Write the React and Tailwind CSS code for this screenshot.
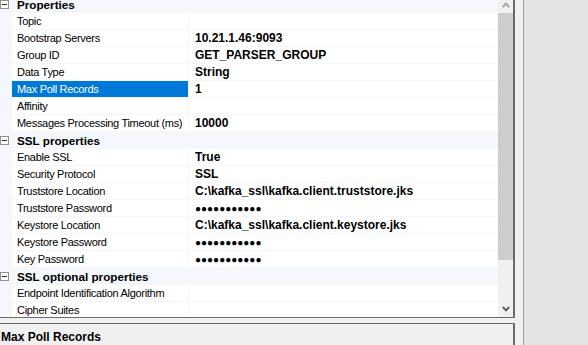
const rows = [
  { cat: "Properties" },
  { label: "Topic", value: "" },
  { label: "Bootstrap Servers", value: "10.21.1.46:9093" },
  { label: "Group ID", value: "GET_PARSER_GROUP" },
  { label: "Data Type", value: "String" },
  { label: "Max Poll Records", value: "1", selected: true },
  { label: "Affinity", value: "" },
  { label: "Messages Processing Timeout (ms)", value: "10000" },
  { cat: "SSL properties" },
  { label: "Enable SSL", value: "True" },
  { label: "Security Protocol", value: "SSL" },
  { label: "Truststore Location", value: "C:\\kafka_ssl\\kafka.client.truststore.jks" },
  { label: "Truststore Password", secret: true },
  { label: "Keystore Location", value: "C:\\kafka_ssl\\kafka.client.keystore.jks" },
  { label: "Keystore Password", secret: true },
  { label: "Key Password", secret: true },
  { cat: "SSL optional properties" },
  { label: "Endpoint Identification Algorithm", value: "" },
  { label: "Cipher Suites", value: "" },
];

function MinusBox() {
  return (
    <svg width="9" height="9" viewBox="0 0 9 9" className="shrink-0">
      <rect x="0.5" y="0.5" width="8" height="8" fill="#fff" stroke="#8e8f8f" />
      <path d="M2 4.5h5" stroke="#333" strokeWidth="1" />
    </svg>
  );
}

function Category({ name }) {
  return (
    <div className="flex h-[17px] shrink-0 items-center bg-[#f4f7fc]">
      <div className="flex w-[17px] items-center">
        <MinusBox />
      </div>
      <span className="text-[11.7px] font-bold leading-[16px] text-black">{name}</span>
    </div>
  );
}

function Row({ label, value, selected, secret }) {
  return (
    <div className="flex h-[17px] shrink-0">
      <div className="w-[12px] bg-[#f4f7fc]" />
      <div
        className={
          selected
            ? "w-[177px] whitespace-nowrap border-b border-r border-[#f4f7fc] bg-[#0078d7] pl-[5px] leading-[16px] tracking-[-0.3px] text-white"
            : "w-[177px] whitespace-nowrap border-b border-r border-[#f4f7fc] bg-white pl-[5px] leading-[16px] tracking-[-0.3px] text-black"
        }
      >
        {label}
      </div>
      <div className="flex-1 whitespace-nowrap border-b border-[#f4f7fc] bg-white pl-[6px] text-[12px] font-bold leading-[16px] text-black">
        {secret ? <span className="text-[10px]">●●●●●●●●●●●</span> : value}
      </div>
    </div>
  );
}

function Chevron({ up, color }) {
  return (
    <svg width="8" height="6" viewBox="0 0 8 6">
      <polyline
        points={up ? "0.8,5 4,1.6 7.2,5" : "0.8,1 4,4.4 7.2,1"}
        fill="none"
        stroke={color}
        strokeWidth="2"
      />
    </svg>
  );
}

export default function App() {
  return (
    <div className="flex h-[345px] w-[588px] overflow-hidden bg-[#f0f0f0] font-['Liberation_Sans',Arial,sans-serif] text-[11px]">
      <div className="flex w-[515px] flex-col">
        <div className="flex h-[318px] border-b border-r-2 border-[#6b6b6b]">
          <div className="flex w-[498px] flex-col overflow-hidden">
            <div className="-mt-[4px] flex flex-col">
              {rows.map((r, i) =>
                r.cat ? <Category key={i} name={r.cat} /> : <Row key={i} {...r} />
              )}
            </div>
          </div>
          <div className="flex w-[15px] flex-col bg-[#f0f0f0]">
            <div className="flex h-[13px] justify-center pt-[2px]">
              <Chevron up color="#a3a3a3" />
            </div>
            <div className="h-[247px] bg-[#cdcdcd]" />
            <div className="flex-1" />
            <div className="flex h-[17px] justify-center pt-[6px]">
              <Chevron color="#606060" />
            </div>
          </div>
        </div>
        <div className="mt-[5px] flex-1 border-r-2 border-t border-[#6b6b6b] bg-[#f0f0f0] pl-[1px] pt-[7px]">
          <div className="text-[12px] font-bold leading-[13px] text-black">Max Poll Records</div>
        </div>
      </div>
      <div className="ml-[8px] flex-1 border-l border-[#a0a0a0] bg-[#e3e3e3]" />
    </div>
  );
}
